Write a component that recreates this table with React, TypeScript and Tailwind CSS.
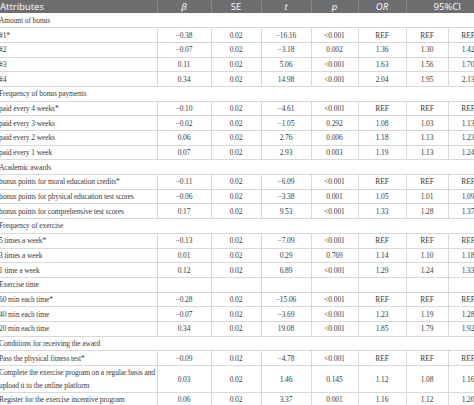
import React from "react";

type Row = { kind: "cat"; label: string; cells?: boolean } | { kind: "data"; label: React.ReactNode; v: string[]; tall?: boolean };

const rows: Row[] = [
  { kind: "cat", label: "Amount of bonus" },
  { kind: "data", label: "#1*", v: ["−0.38", "0.02", "−16.16", "<0.001", "REF", "REF", "REF"] },
  { kind: "data", label: "#2", v: ["−0.07", "0.02", "−3.18", "0.002", "1.36", "1.30", "1.42"] },
  { kind: "data", label: "#3", v: ["0.11", "0.02", "5.06", "<0.001", "1.63", "1.56", "1.70"] },
  { kind: "data", label: "#4", v: ["0.34", "0.02", "14.98", "<0.001", "2.04", "1.95", "2.13"] },
  { kind: "cat", label: "Frequency of bonus payments" },
  { kind: "data", label: "paid every 4 weeks*", v: ["−0.10", "0.02", "−4.61", "<0.001", "REF", "REF", "REF"] },
  { kind: "data", label: "paid every 3 weeks", v: ["−0.02", "0.02", "−1.05", "0.292", "1.08", "1.03", "1.13"] },
  { kind: "data", label: "paid every 2 weeks", v: ["0.06", "0.02", "2.76", "0.006", "1.18", "1.13", "1.23"] },
  { kind: "data", label: "paid every 1 week", v: ["0.07", "0.02", "2.93", "0.003", "1.19", "1.13", "1.24"] },
  { kind: "cat", label: "Academic awards" },
  { kind: "data", label: "bonus points for moral education credits*", v: ["−0.11", "0.02", "−6.09", "<0.001", "REF", "REF", "REF"] },
  { kind: "data", label: "bonus points for physical education test scores", v: ["−0.06", "0.02", "−3.38", "0.001", "1.05", "1.01", "1.09"] },
  { kind: "data", label: "bonus points for comprehensive test scores", v: ["0.17", "0.02", "9.53", "<0.001", "1.33", "1.28", "1.37"] },
  { kind: "cat", label: "Frequency of exercise" },
  { kind: "data", label: "5 times a week*", v: ["−0.13", "0.02", "−7.09", "<0.001", "REF", "REF", "REF"] },
  { kind: "data", label: "3 times a week", v: ["0.01", "0.02", "0.29", "0.769", "1.14", "1.10", "1.18"] },
  { kind: "data", label: "1 time a week", v: ["0.12", "0.02", "6.89", "<0.001", "1.29", "1.24", "1.33"] },
  { kind: "cat", label: "Exercise time", cells: true },
  { kind: "data", label: "60 min each time*", v: ["−0.28", "0.02", "−15.06", "<0.001", "REF", "REF", "REF"] },
  { kind: "data", label: "40 min each time", v: ["−0.07", "0.02", "−3.69", "<0.001", "1.23", "1.19", "1.28"] },
  { kind: "data", label: "20 min each time", v: ["0.34", "0.02", "19.08", "<0.001", "1.85", "1.79", "1.92"] },
  { kind: "cat", label: "Conditions for receiving the award" },
  { kind: "data", label: "Pass the physical fitness test*", v: ["−0.09", "0.02", "−4.78", "<0.001", "REF", "REF", "REF"] },
  {
    kind: "data",
    label: (
      <>
        Complete the exercise program on a regular basis and
        <br />
        upload it to the online platform
      </>
    ),
    v: ["0.03", "0.02", "1.46", "0.145", "1.12", "1.08", "1.16"],
    tall: true,
  },
  { kind: "data", label: "Register for the exercise incentive program", v: ["0.06", "0.02", "3.37", "0.001", "1.16", "1.12", "1.20"] },
];

const serif = { fontFamily: '"Liberation Serif", "Times New Roman", serif' };

export default function App() {
  return (
    <div className="w-[474px] h-[405px] overflow-hidden bg-white">
      <table
        className="ml-[-2px] w-[490px] table-fixed border-collapse text-[7.5px] tracking-[-0.1px] text-[#3a3a3a]"
        style={serif}
      >
        <colgroup>
          <col className="w-[159px]" />
          <col className="w-[54px]" />
          <col className="w-[50px]" />
          <col className="w-[50px]" />
          <col className="w-[47px]" />
          <col className="w-[48px]" />
          <col className="w-[42px]" />
          <col className="w-[40px]" />
        </colgroup>
        <thead>
          <tr className="h-[13px] bg-[#6d6e70] text-white text-[9.5px] font-normal tracking-normal [font-family:'Open_Sans',sans-serif]">
            <th className="pl-[2px] text-left font-normal leading-[13px] border-r border-[#858688]">Attributes</th>
            <th className="font-normal italic leading-[13px] border-r border-[#858688]">β</th>
            <th className="font-normal leading-[13px] border-r border-[#858688]">SE</th>
            <th className="font-normal italic leading-[13px] border-r border-[#858688]">t</th>
            <th className="font-normal italic leading-[13px] border-r border-[#858688]">p</th>
            <th className="font-normal italic leading-[13px] border-r border-[#858688]">OR</th>
            <th colSpan={2} className="font-normal leading-[13px]">95%CI</th>
          </tr>
        </thead>
        <tbody>
          {rows.map((r, i) => {
            if (r.kind === "cat") {
              if (r.cells) {
                return (
                  <tr key={i} className="h-[14.7px] border-b border-[#d9d9d9]">
                    <td className="p-0 pl-[1px] text-left leading-[9px] whitespace-nowrap border-r border-[#d9d9d9]">{r.label}</td>
                    {Array.from({ length: 7 }).map((_, j) => (
                      <td key={j} className="p-0 border-r border-[#d9d9d9]"></td>
                    ))}
                  </tr>
                );
              }
              return (
                <tr key={i} className="h-[14.7px] border-b border-[#d9d9d9]">
                  <td colSpan={8} className="p-0 pl-[1px] text-left leading-[9px] whitespace-nowrap">{r.label}</td>
                </tr>
              );
            }
            return (
              <tr key={i} className={`${r.tall ? "h-[26px]" : "h-[14.7px]"} border-b border-[#d9d9d9]`}>
                <td className={`p-0 pl-[1px] text-left whitespace-nowrap border-r border-[#d9d9d9] ${r.tall ? "leading-[13px]" : "leading-[9px]"}`}>{r.label}</td>
                {r.v.map((x, j) => (
                  <td key={j} className="p-0 text-center leading-[9px] whitespace-nowrap border-r border-[#d9d9d9]">{x}</td>
                ))}
              </tr>
            );
          })}
        </tbody>
      </table>
    </div>
  );
}
